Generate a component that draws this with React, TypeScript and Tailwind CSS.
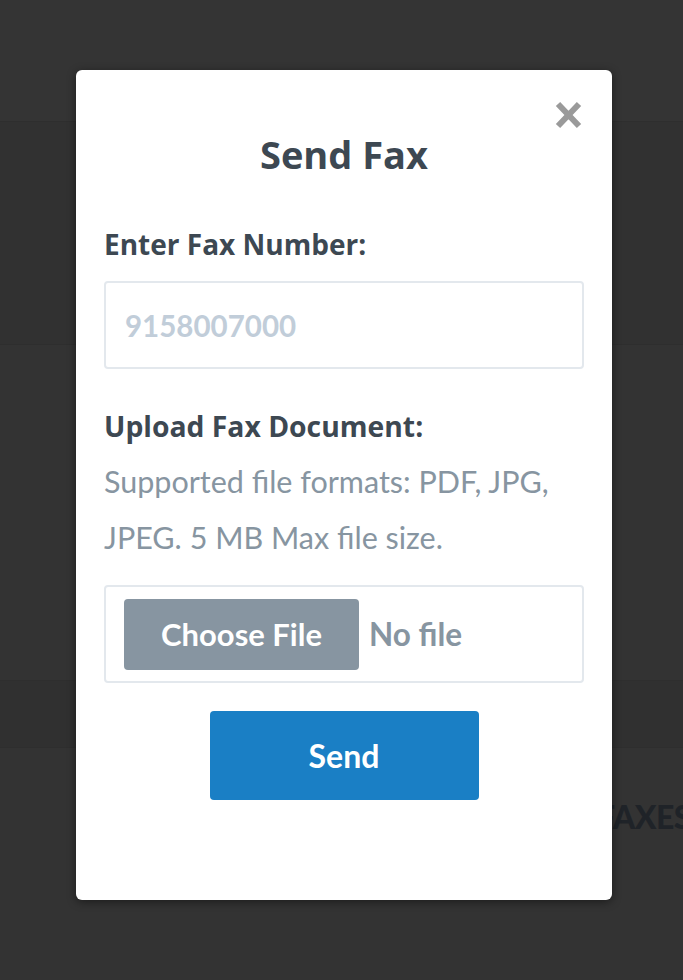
export default function App() {
  return (
    <div className="relative w-[683px] h-[980px] overflow-hidden bg-[#333333] font-['Lato',sans-serif]">
      {/* page behind the overlay */}
      <div className="flex flex-col">
        <div className="h-[122px] bg-[#343434] border-b border-[#2e2e2e]" />
        <div className="h-[223px] bg-[#313131] border-b border-[#2e2e2e]" />
        <div className="h-[335px] bg-[#333333]" />
        <div className="h-[68px] bg-[#303030] border-y border-[#2e2e2e]" />
        <div className="flex pt-[49px] pl-[597px]">
          <span className="whitespace-nowrap text-[32px] font-black leading-[40px] tracking-[-0.5px] text-[#1f2328]">
            FAXES
          </span>
        </div>
      </div>

      {/* modal */}
      <div className="absolute inset-0 pt-[70px] pl-[76px]">
        <div className="relative w-[536px] h-[830px] rounded-[6px] bg-white px-[28px] shadow-[0_2px_10px_rgba(0,0,0,0.45)]">
          <button className="absolute right-[30px] top-[31px] w-[27px] h-[28px]">
            <svg viewBox="0 0 27 28" className="w-[27px] h-[28px]">
              <path d="M3 3 L24 25 M24 3 L3 25" stroke="#9a9a9a" strokeWidth="6" />
            </svg>
          </button>

          <h2 className="pt-[60px] text-center font-['Open_Sans',sans-serif] text-[38px] font-bold leading-[48px] text-[#3d4852]">
            Send Fax
          </h2>

          <label className="mt-[49px] block font-['Open_Sans',sans-serif] text-[28px] font-bold leading-[34px] text-[#3d4852]">
            Enter Fax Number:
          </label>
          <input
            placeholder="9158007000"
            className="mt-[20px] block w-full h-[88px] rounded-[4px] border-2 border-[#e3e8ed] px-[19px] text-[29.5px] font-bold text-[#3d4852] placeholder:text-[#c1cdd9] outline-none"
          />

          <label className="mt-[40px] block font-['Open_Sans',sans-serif] text-[28.3px] font-bold leading-[34px] text-[#3d4852]">
            Upload Fax Document:
          </label>
          <p className="mt-[10px] text-[30.5px] leading-[56px] text-[#8795a1]">
            Supported file formats: PDF, JPG, JPEG. 5 MB Max file size.
          </p>

          <div className="mt-[20px] flex items-center gap-[10px] h-[98px] rounded-[4px] border-2 border-[#e3e8ed] pl-[18px] pt-[1px]">
            <div className="flex items-center justify-center w-[235px] h-[71px] rounded-[4px] bg-[#8795a1] text-[31px] font-bold text-white">
              Choose File
            </div>
            <span className="text-[31.5px] font-bold text-[#8795a1]">No file</span>
          </div>

          <div className="mt-[28px] flex justify-center">
            <button className="w-[269px] h-[89px] rounded-[4px] bg-[#1a7fc5] text-[32px] font-bold text-white">
              Send
            </button>
          </div>
        </div>
      </div>
    </div>
  );
}
